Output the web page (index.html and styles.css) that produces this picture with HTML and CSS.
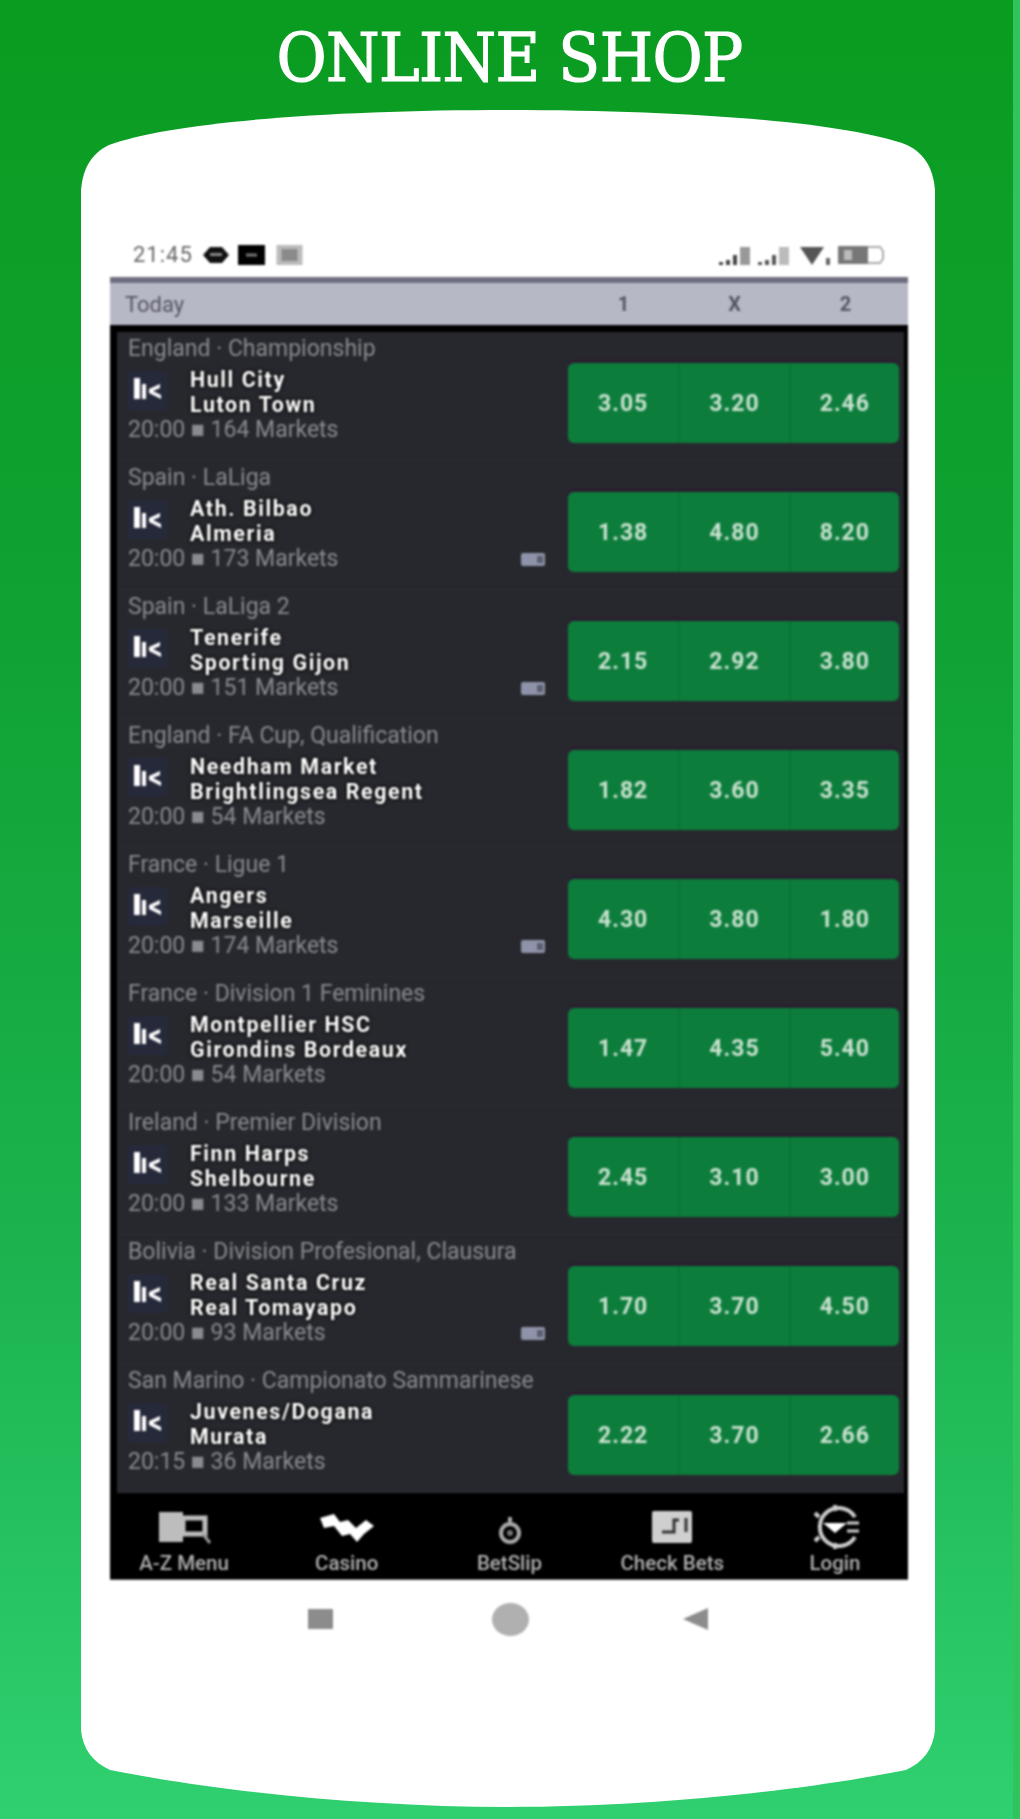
FILE: index.html
```html
<!DOCTYPE html>
<html lang="en">
<head>
<meta charset="utf-8">
<title>Online Shop</title>
<link rel="stylesheet" href="styles.css">
</head>
<body>
<main class="page">
  <h1 class="title">ONLINE SHOP</h1>
  <section class="phone">
    <div class="status">
      <div class="status-left">
        <span class="clock">21:45</span>
        <svg class="ic-eye" viewBox="0 0 26 20"><path d="M7 2h12l7 8-7 8H7l-7-8z" fill="#111"/><rect x="7" y="8" width="12" height="3" fill="#888"/></svg>
        <svg class="ic-box" viewBox="0 0 27 20"><rect width="27" height="20" fill="#000"/><rect x="8" y="8.500" width="11" height="3" fill="#777"/></svg>
        <svg class="ic-box" viewBox="0 0 26 20"><rect width="26" height="20" fill="#bbb"/><rect x="5" y="4" width="16" height="12" fill="#8a8a8a"/></svg>
      </div>
      <div class="status-right">
        <svg class="ic-sig" viewBox="0 0 32 20"><path d="M0 17h4v3H0zM7 15h4v5H7zM14 10h4v10h-4z" fill="#444"/><path d="M21 2h10v18H21z" fill="#999"/></svg>
        <svg class="ic-sig" viewBox="0 0 32 20"><path d="M0 17h4v3H0zM7 15h4v5H7zM14 10h4v10h-4z" fill="#555"/><path d="M21 2h10v18H21z" fill="#bbb"/></svg>
        <svg class="ic-wifi" viewBox="0 0 30 20"><path d="M0 2h24l-12 18z" fill="#555"/><rect x="26" y="13" width="4" height="7" fill="#666"/></svg>
        <svg class="ic-bat" viewBox="0 0 47 20"><rect x="0" y="1" width="30" height="18" fill="#777"/><rect x="6" y="5" width="8" height="10" fill="#bbb"/><path d="M30 2h12l3 4v8l-3 4H30" fill="none" stroke="#aaa" stroke-width="2"/></svg>
      </div>
    </div>

    <div class="screen">
      <div class="head">
        <span class="head-label">Today</span>
        <div class="head-cols"><span>1</span><span>X</span><span>2</span></div>
      </div>

      <div class="list">
        <article class="row">
          <div class="info">
            <div class="league">England · Championship</div>
            <div class="match">
              <svg class="logo" viewBox="0 0 39 39"><rect width="39" height="39" rx="3" fill="#26293a"/><path d="M6 7h6v21H6zM14 13h4v15h-4zM21 18l11-5v4l-7 3 8 4v4l-12-6z" fill="#fff"/></svg>
              <div class="teams"><div>Hull City</div><div>Luton Town</div></div>
            </div>
            <div class="meta"><span>20:00 ■ 164 Markets</span></div>
          </div>
          <div class="odds"><span>3.05</span><span>3.20</span><span>2.46</span></div>
        </article>

        <article class="row">
          <div class="info">
            <div class="league">Spain · LaLiga</div>
            <div class="match">
              <svg class="logo" viewBox="0 0 39 39"><rect width="39" height="39" rx="3" fill="#26293a"/><path d="M6 7h6v21H6zM14 13h4v15h-4zM21 18l11-5v4l-7 3 8 4v4l-12-6z" fill="#fff"/></svg>
              <div class="teams"><div>Ath. Bilbao</div><div>Almeria</div></div>
            </div>
            <div class="meta"><span>20:00 ■ 173 Markets</span><svg class="tv" viewBox="0 0 24 13"><rect width="24" height="13" rx="2" fill="#8f93aa"/><rect x="16" y="3" width="6" height="7" fill="#5c5f70"/></svg></div>
          </div>
          <div class="odds"><span>1.38</span><span>4.80</span><span>8.20</span></div>
        </article>

        <article class="row">
          <div class="info">
            <div class="league">Spain · LaLiga 2</div>
            <div class="match">
              <svg class="logo" viewBox="0 0 39 39"><rect width="39" height="39" rx="3" fill="#26293a"/><path d="M6 7h6v21H6zM14 13h4v15h-4zM21 18l11-5v4l-7 3 8 4v4l-12-6z" fill="#fff"/></svg>
              <div class="teams"><div>Tenerife</div><div>Sporting Gijon</div></div>
            </div>
            <div class="meta"><span>20:00 ■ 151 Markets</span><svg class="tv" viewBox="0 0 24 13"><rect width="24" height="13" rx="2" fill="#8f93aa"/><rect x="16" y="3" width="6" height="7" fill="#5c5f70"/></svg></div>
          </div>
          <div class="odds"><span>2.15</span><span>2.92</span><span>3.80</span></div>
        </article>

        <article class="row">
          <div class="info">
            <div class="league">England · FA Cup, Qualification</div>
            <div class="match">
              <svg class="logo" viewBox="0 0 39 39"><rect width="39" height="39" rx="3" fill="#26293a"/><path d="M6 7h6v21H6zM14 13h4v15h-4zM21 18l11-5v4l-7 3 8 4v4l-12-6z" fill="#fff"/></svg>
              <div class="teams"><div>Needham Market</div><div>Brightlingsea Regent</div></div>
            </div>
            <div class="meta"><span>20:00 ■ 54 Markets</span></div>
          </div>
          <div class="odds"><span>1.82</span><span>3.60</span><span>3.35</span></div>
        </article>

        <article class="row">
          <div class="info">
            <div class="league">France · Ligue 1</div>
            <div class="match">
              <svg class="logo" viewBox="0 0 39 39"><rect width="39" height="39" rx="3" fill="#26293a"/><path d="M6 7h6v21H6zM14 13h4v15h-4zM21 18l11-5v4l-7 3 8 4v4l-12-6z" fill="#fff"/></svg>
              <div class="teams"><div>Angers</div><div>Marseille</div></div>
            </div>
            <div class="meta"><span>20:00 ■ 174 Markets</span><svg class="tv" viewBox="0 0 24 13"><rect width="24" height="13" rx="2" fill="#8f93aa"/><rect x="16" y="3" width="6" height="7" fill="#5c5f70"/></svg></div>
          </div>
          <div class="odds"><span>4.30</span><span>3.80</span><span>1.80</span></div>
        </article>

        <article class="row">
          <div class="info">
            <div class="league">France · Division 1 Feminines</div>
            <div class="match">
              <svg class="logo" viewBox="0 0 39 39"><rect width="39" height="39" rx="3" fill="#26293a"/><path d="M6 7h6v21H6zM14 13h4v15h-4zM21 18l11-5v4l-7 3 8 4v4l-12-6z" fill="#fff"/></svg>
              <div class="teams"><div>Montpellier HSC</div><div>Girondins Bordeaux</div></div>
            </div>
            <div class="meta"><span>20:00 ■ 54 Markets</span></div>
          </div>
          <div class="odds"><span>1.47</span><span>4.35</span><span>5.40</span></div>
        </article>

        <article class="row">
          <div class="info">
            <div class="league">Ireland · Premier Division</div>
            <div class="match">
              <svg class="logo" viewBox="0 0 39 39"><rect width="39" height="39" rx="3" fill="#26293a"/><path d="M6 7h6v21H6zM14 13h4v15h-4zM21 18l11-5v4l-7 3 8 4v4l-12-6z" fill="#fff"/></svg>
              <div class="teams"><div>Finn Harps</div><div>Shelbourne</div></div>
            </div>
            <div class="meta"><span>20:00 ■ 133 Markets</span></div>
          </div>
          <div class="odds"><span>2.45</span><span>3.10</span><span>3.00</span></div>
        </article>

        <article class="row">
          <div class="info">
            <div class="league">Bolivia · Division Profesional, Clausura</div>
            <div class="match">
              <svg class="logo" viewBox="0 0 39 39"><rect width="39" height="39" rx="3" fill="#26293a"/><path d="M6 7h6v21H6zM14 13h4v15h-4zM21 18l11-5v4l-7 3 8 4v4l-12-6z" fill="#fff"/></svg>
              <div class="teams"><div>Real Santa Cruz</div><div>Real Tomayapo</div></div>
            </div>
            <div class="meta"><span>20:00 ■ 93 Markets</span><svg class="tv" viewBox="0 0 24 13"><rect width="24" height="13" rx="2" fill="#8f93aa"/><rect x="16" y="3" width="6" height="7" fill="#5c5f70"/></svg></div>
          </div>
          <div class="odds"><span>1.70</span><span>3.70</span><span>4.50</span></div>
        </article>

        <article class="row">
          <div class="info">
            <div class="league">San Marino · Campionato Sammarinese</div>
            <div class="match">
              <svg class="logo" viewBox="0 0 39 39"><rect width="39" height="39" rx="3" fill="#26293a"/><path d="M6 7h6v21H6zM14 13h4v15h-4zM21 18l11-5v4l-7 3 8 4v4l-12-6z" fill="#fff"/></svg>
              <div class="teams"><div>Juvenes/Dogana</div><div>Murata</div></div>
            </div>
            <div class="meta"><span>20:15 ■ 36 Markets</span></div>
          </div>
          <div class="odds"><span>2.22</span><span>3.70</span><span>2.66</span></div>
        </article>
      </div>

      <nav class="tabs">
        <div class="tab">
          <svg class="tab-ic" viewBox="0 0 100 34"><rect x="25" y="2" width="24" height="30" fill="#bdbdbd"/><path d="M49 8h22v16H49z" fill="none" stroke="#bdbdbd" stroke-width="5"/><path d="M69 24l7 9" stroke="#999" stroke-width="3"/></svg>
          <span>A-Z Menu</span>
        </div>
        <div class="tab">
          <svg class="tab-ic" viewBox="0 0 100 34"><path d="M23 8l14-4 6 8 8-2 8 8 10-8 8 6-10 8-7 8-7-8-8 2-8-10-10 2z" fill="#fff"/></svg>
          <span>Casino</span>
        </div>
        <div class="tab">
          <svg class="tab-ic" viewBox="0 0 100 34"><path d="M50 7v5" stroke="#aaa" stroke-width="4"/><circle cx="50" cy="23" r="9" fill="none" stroke="#aaa" stroke-width="4"/><circle cx="50" cy="23" r="3" fill="#777"/></svg>
          <span>BetSlip</span>
        </div>
        <div class="tab">
          <svg class="tab-ic" viewBox="0 0 100 34"><rect x="30" y="1" width="40" height="32" rx="2" fill="#cfcfcf"/><path d="M40 22h12V10h5M64 8v14" fill="none" stroke="#333" stroke-width="3"/></svg>
          <span>Check Bets</span>
        </div>
        <div class="tab">
          <svg class="tab-ic tab-ic-login" viewBox="0 0 100 44"><path d="M70 12A19 19 0 1 0 70 32" fill="none" stroke="#ccc" stroke-width="4"/><path d="M50 0v6M30 8l4 4M30 36l4-4M50 38v6" stroke="#ccc" stroke-width="4"/><path d="M62 18H38l12 10z" fill="#fff"/><path d="M62 18h12M62 26h12" stroke="#ccc" stroke-width="3"/></svg>
          <span>Login</span>
        </div>
      </nav>
    </div>

    <div class="softkeys">
      <span class="key-square"></span>
      <span class="key-circle"></span>
      <svg class="key-back" viewBox="0 0 25 22"><path d="M25 0v22L0 11z" fill="#8c8c8c"/></svg>
    </div>
  </section>
</main>
</body>
</html>
```

FILE: styles.css
```css
* { box-sizing: border-box; }
html, body { margin: 0; padding: 0; }
body { width: 1020px; height: 1819px; overflow: hidden; font-family: Roboto, "Liberation Sans", sans-serif; }

.page {
  width: 1020px;
  height: 1819px;
  padding-top: 110px;
  background: linear-gradient(180deg, #0a9c20 0%, #10a233 35%, #1cb450 70%, #30d070 100%);
  border-right: 7px solid #30c45c;
  position: relative;
}

.title {
  position: absolute;
  left: 6px;
  right: 0;
  top: 16px;
  margin: 0;
  text-align: center;
  font-family: "DejaVu Serif Condensed", "DejaVu Serif", serif;
  font-weight: 400;
  font-size: 68px;
  line-height: 84px;
  letter-spacing: -0.6px;
  color: #fff;
  -webkit-text-stroke: 1.2px #fff;
  filter: blur(0.7px);
}

.phone {
  width: 854px;
  height: 1697px;
  margin-left: 81px;
  padding: 130px 27px 0 29px;
  background: #fff;
  clip-path: path("M0 80C2 58 10 44 28 35C90 12 250 0 427 0C604 0 764 12 826 35C844 44 852 58 854 80L854 1620C852 1640 842 1652 825 1660C725 1680 575 1697 427 1697C279 1697 129 1680 29 1660C12 1652 2 1640 0 1620Z");
}

.status {
  height: 37px;
  padding: 4px 23px 0 23px;
  display: flex;
  justify-content: space-between;
  align-items: flex-start;
  filter: blur(1px);
}
.status-left, .status-right { display: flex; align-items: center; height: 21px; }
.clock { font-size: 22px; color: #666; width: 70px; letter-spacing: 1px; }
.ic-eye { width: 26px; height: 20px; margin-right: 9px; }
.ic-box { width: 27px; height: 20px; margin-right: 11px; }
.ic-sig { width: 32px; height: 20px; margin-right: 7px; }
.ic-wifi { width: 30px; height: 20px; margin: 0 8px 0 3px; }
.ic-bat { width: 47px; height: 20px; }

.screen {
  background: #000;
  border-top: 6px solid #6e6e80;
  filter: blur(0.9px);
}

.head {
  height: 42px;
  background: #b6b8c6;
  display: flex;
  justify-content: space-between;
  align-items: center;
  padding: 0 7px 0 15px;
  color: #55565f;
  font-size: 22px;
}
.head-cols { width: 333px; display: grid; grid-template-columns: repeat(3, 1fr); text-align: center; font-size: 20px; font-weight: 700; }

.list { padding: 6px 4px 9px 7px; }

.row {
  height: 129px;
  display: grid;
  grid-template-columns: 1fr 331px;
  background: #27282d;
  padding-right: 5px;
  border-bottom: 1px solid #2c2d33;
}
.row:first-child { margin-top: 1px; }

.info { padding: 2px 23px 0 11px; min-width: 0; }
.league { height: 30px; line-height: 30px; font-size: 23px; color: #8a8b90; white-space: nowrap; }
.match { display: flex; align-items: center; gap: 23px; margin-top: 3px; height: 50px; }
.logo { width: 39px; height: 39px; flex: none; margin-top: -4px; }
.teams { font-size: 21.400px; line-height: 25px; letter-spacing: 1.6px; font-weight: 700; color: #fff; white-space: nowrap; text-shadow: 0 0 2px #000, 0 0 4px #000; }
.meta { height: 26px; line-height: 26px; font-size: 23px; color: #8a8b90; display: flex; justify-content: space-between; align-items: center; }
.tv { width: 24px; height: 13px; }

.odds {
  margin-top: 31px;
  height: 80px;
  display: grid;
  grid-template-columns: repeat(3, 1fr);
  background: #0d7d3c;
  border-radius: 6px;
  box-shadow: 0 -4px 0 #2a2030;
}
.odds span {
  display: flex;
  align-items: center;
  justify-content: center;
  color: #c9e2cf;
  font-size: 23px;
  font-weight: 700;
  letter-spacing: 1px;
}
.odds span + span { border-left: 2px solid #0b7336; }

.tabs {
  height: 78px;
  background: #000;
  padding: 4px 23px 0 24px;
  display: flex;
  justify-content: space-between;
  border-bottom: 1px solid #555;
}
.tab { width: 100px; display: flex; flex-direction: column; align-items: center; }
.tab-ic { width: 100px; height: 34px; margin-top: 4px; flex: none; }
.tab-ic-login { height: 44px; margin-top: -1px; margin-bottom: -5px; }
.tab span { margin-top: 8px; font-size: 20.500px; line-height: 22px; font-weight: 500; color: #b0b0b0; white-space: nowrap; }

.softkeys {
  display: flex;
  align-items: center;
  height: 36px;
  margin-top: 21px;
  padding-left: 198px;
  filter: blur(1px);
}
.key-square { width: 25px; height: 20px; background: #8c8c8c; }
.key-circle { width: 37px; height: 33px; border-radius: 50%; background: #b0b0b0; margin-left: 159px; }
.key-back { width: 25px; height: 22px; margin-left: 154px; }
```
